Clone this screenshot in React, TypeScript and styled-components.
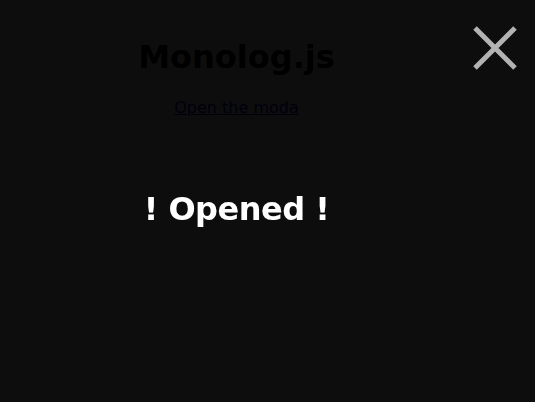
import React from "react";
import styled, { createGlobalStyle } from "styled-components";

const GlobalStyle = createGlobalStyle`
  html, body {
    margin: 0;
    padding: 0;
    background: #ffffff;
    font-family: "DejaVu Sans", Verdana, sans-serif;
  }
`;

const Page = styled.main`
  width: 473px;
  padding-top: 39px;
  display: flex;
  flex-direction: column;
  align-items: center;
  gap: 22px;
`;

const Title = styled.h1`
  margin: 0;
  font-size: 32px;
  font-weight: bold;
  color: #000;
  line-height: 37px;
`;

const OpenLink = styled.a`
  font-size: 16px;
  color: #0000ee;
  text-decoration: underline;
  line-height: 19px;
`;

const Overlay = styled.div`
  position: fixed;
  inset: 0;
  background: rgba(0, 0, 0, 0.95);
  z-index: 10;
`;

const Dialog = styled.div`
  width: 473px;
  padding-top: 191px;
  display: flex;
  justify-content: center;
`;

const Message = styled.p`
  margin: 0;
  font-size: 32px;
  font-weight: bold;
  line-height: 37px;
  letter-spacing: -0.5px;
  color: #fff;
`;

const CloseButton = styled.button`
  position: absolute;
  top: 24px;
  right: 16px;
  width: 48px;
  height: 48px;
  padding: 0;
  border: none;
  background: transparent;
  cursor: pointer;
  display: flex;
  align-items: center;
  justify-content: center;
`;

export default function App() {
  return (
    <>
      <GlobalStyle />
      <Page>
        <Title>Monolog.js</Title>
        <OpenLink href="#">Open the moda</OpenLink>
      </Page>
      <Overlay>
        <Dialog>
          <Message>! Opened !</Message>
        </Dialog>
        <CloseButton aria-label="Close">
          <svg width="48" height="48" viewBox="0 0 48 48">
            <path
              d="M4 4 L44 44 M44 4 L4 44"
              stroke="#b3b3b3"
              strokeWidth="5"
              fill="none"
            />
          </svg>
        </CloseButton>
      </Overlay>
    </>
  );
}
